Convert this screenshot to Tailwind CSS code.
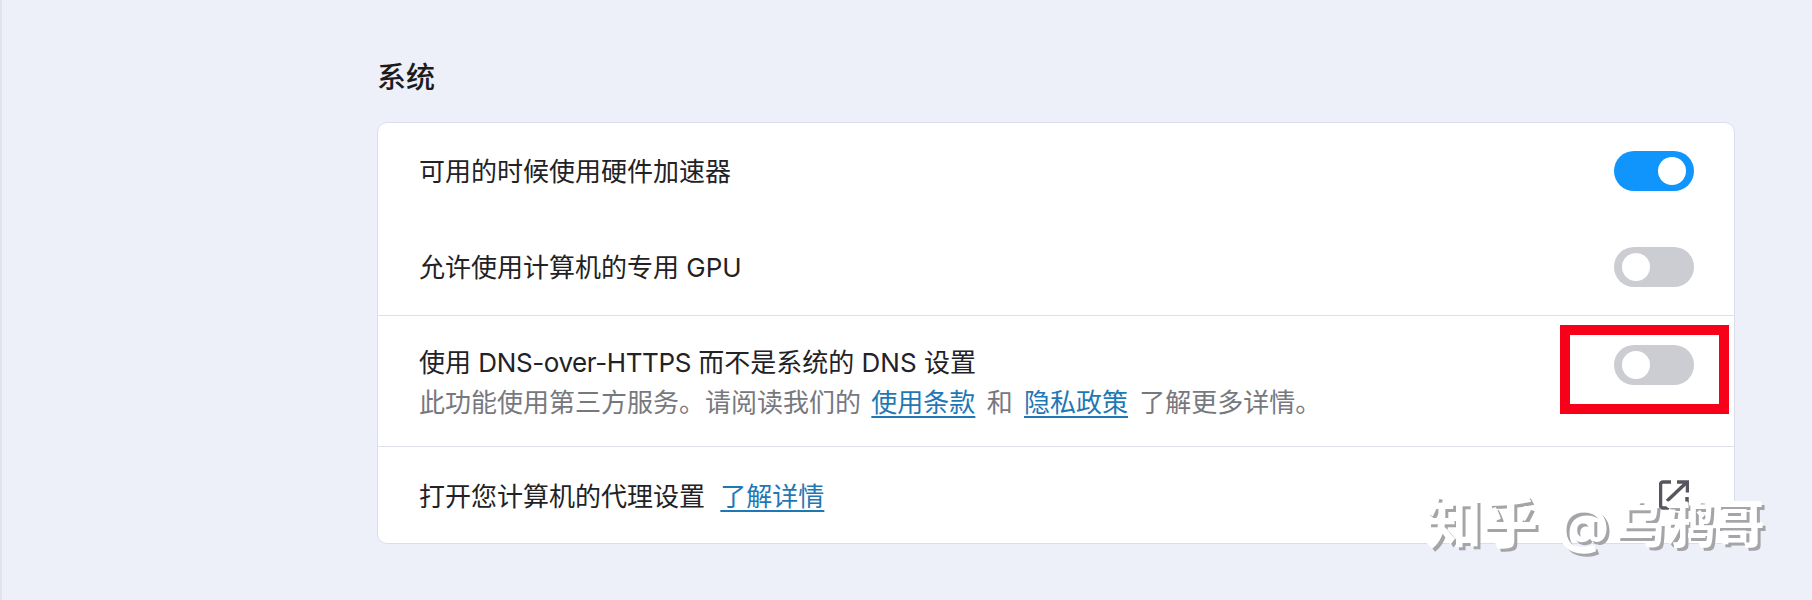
<!DOCTYPE html>
<html>
<head>
    <title>系统设置</title>
    <script src="https://cdn.jsdelivr.net/npm/@tailwindcss/browser@4"></script>
</head>
<body class="bg-[#edf0f9] font-['Inter','Noto_Sans_CJK_SC',sans-serif]">
    <div class="relative h-[600px] overflow-hidden border-l-2 border-[#dfe3ee] pl-[375px] pt-[58px]">
        <h2 class="text-[29px] leading-[40px] font-medium text-[#1c1c20]">系统</h2>

        <!-- Settings card -->
        <div class="mt-[24px] w-[1358px] rounded-[10px] border border-[#d9deea] bg-white">
            <div class="flex h-[96px] items-center justify-between pl-[41px] pr-[40px]">
                <span class="text-[26px] text-[#222226]">可用的时候使用硬件加速器</span>
                <div class="flex h-[40px] w-[80px] items-center justify-end rounded-full bg-[#0f95fb] pr-[8px]">
                    <div class="h-[28px] w-[28px] rounded-full bg-white"></div>
                </div>
            </div>
            <div class="flex h-[96px] items-center justify-between pl-[41px] pr-[40px]">
                <span class="text-[26px] text-[#222226]">允许使用计算机的专用 GPU</span>
                <div class="flex h-[40px] w-[80px] items-center rounded-full bg-[#cccdd3] pl-[8px]">
                    <div class="h-[28px] w-[28px] rounded-full bg-white"></div>
                </div>
            </div>
            <div class="flex h-[131px] items-start justify-between border-t border-[#dde0e6] pl-[41px] pr-[40px] pt-[29px]">
                <div>
                    <div class="text-[26px] leading-[36px] text-[#222226]">使用 <span class="tracking-[-0.4px]">DNS-over-HTTPS</span> 而不是系统的 DNS 设置</div>
                    <div class="mt-[2px] text-[26px] leading-[40px] text-[#77787e]">
                        此功能使用第三方服务。请阅读我们的
                        <a class="ml-[3px] text-[#1f78b4] underline underline-offset-4">使用条款</a>
                        <span class="mx-[4px]">和</span>
                        <a class="text-[#1f78b4] underline underline-offset-4">隐私政策</a>
                        <span class="ml-[4px]">了解更多详情。</span>
                    </div>
                </div>
                <div class="flex h-[40px] w-[80px] items-center rounded-full bg-[#cccdd3] pl-[8px]">
                    <div class="h-[28px] w-[28px] rounded-full bg-white"></div>
                </div>
            </div>
            <div class="flex h-[97px] items-center justify-between border-t border-[#dde0e6] pl-[41px] pr-[45px]">
                <div class="mt-[2px] text-[26px] text-[#222226]">
                    打开您计算机的代理设置
                    <a class="ml-[8px] text-[#1f78b4] underline underline-offset-4">了解详情</a>
                </div>
                <svg class="h-[30px] w-[30px]" viewBox="0 0 30 30" fill="none" stroke="#55565e" stroke-width="3.500">
                    <path d="M12 2H4a2.500 2.500 0 0 0-2.500 2.500V25.500A2.500 2.500 0 0 0 4 28h21.500a2.500 2.500 0 0 0 2.500-2.500V17"/>
                    <path d="M8 21 27 3"/>
                    <path d="M18 2h10.500v10.500"/>
                </svg>
            </div>
        </div>

        <!-- Red annotation box -->
        <div class="absolute left-[1558px] top-[325px] h-[89px] w-[169px] border-[10px] border-[#f6001a]"></div>

        <!-- Watermark -->
        <div class="absolute left-[1424px] top-[488px] flex items-baseline whitespace-nowrap font-bold text-white [text-shadow:3px_3px_0_#a5a5a9,-1px_-1px_0_#ffffff]">
            <span class="text-[56px] leading-[70px]">知乎</span>
            <span class="ml-[20px] text-[50px] leading-[70px]">@</span>
            <span class="ml-[6px] text-[50px] leading-[70px]">乌鸦哥</span>
        </div>
    </div>
</body>
</html>
